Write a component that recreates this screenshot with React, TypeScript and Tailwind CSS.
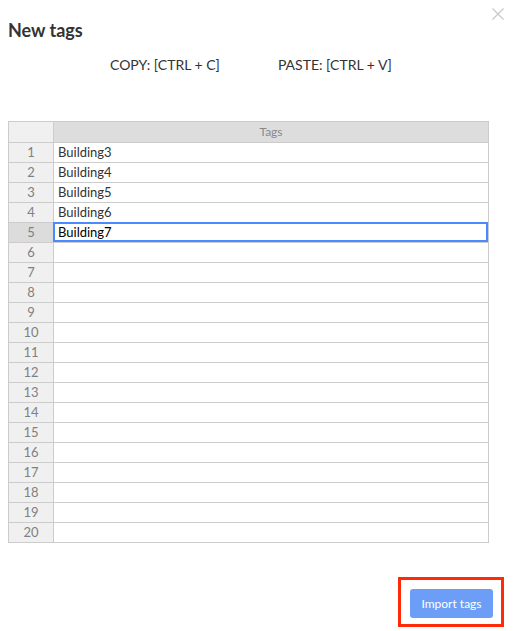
import React from 'react';

const tags = ['Building3', 'Building4', 'Building5', 'Building6', 'Building7'];
const rows = Array.from({ length: 20 }, (_, i) => tags[i] ?? '');
const selectedRow = 4;

const App: React.FC = () => {
  return (
    <div className="relative w-[513px] h-[631px] bg-white text-[#333] font-['Lato','Liberation_Sans',sans-serif]">
      {/* close button */}
      <button className="absolute top-[8px] right-[9px] w-[12px] h-[12px] text-[#c8c8c8]">
        <svg viewBox="0 0 12 12" width="12" height="12" fill="none" stroke="currentColor" strokeWidth="1.2">
          <path d="M0.5 0.5 L11.5 11.5 M11.5 0.5 L0.5 11.5" />
        </svg>
      </button>

      <h2 className="pt-[19px] pl-[8px] text-[18px] leading-[22px] font-bold text-[#333]">New tags</h2>

      <div className="mt-[14px] flex pl-[110px] gap-[58px] text-[14px] leading-[20px] text-[#333]">
        <span>COPY: [CTRL + C]</span>
        <span>PASTE: [CTRL + V]</span>
      </div>

      <div className="mt-[46px] mx-[8px] w-[481px] text-[13px]">
        <div className="flex h-[22px]">
          <div className="w-[46px] border border-[#ccc] bg-[#f0f0f0]" />
          <div className="flex-1 border-y border-r border-[#ccc] bg-[#dddddd] flex items-center justify-center text-[12px] text-[#888]">
            Tags
          </div>
        </div>
        {rows.map((value, i) => (
          <div key={i} className="flex h-[20px]">
            <div
              className={`w-[46px] border-x border-b border-[#ccc] flex items-center justify-center text-[#808080] ${
                i === selectedRow ? 'bg-[#dcdcdc]' : 'bg-[#f0f0f0]'
              }`}
            >
              {i + 1}
            </div>
            <div
              className={`relative flex-1 border-r border-b border-[#ccc] flex items-center pl-[4px] ${
                i === selectedRow ? 'text-black' : 'text-[#333]'
              }`}
            >
              {value}
              {i === selectedRow && (
                <div className="absolute -top-px -left-px right-0 bottom-0 border-2 border-[#4b89ff]" />
              )}
            </div>
          </div>
        ))}
      </div>

      <div className="mt-[34px] flex justify-end pr-[9px]">
        <div className="border-[3px] border-[#ff2a0a] pl-[9px] pr-[8px] pt-[9px] pb-[6px]">
          <button className="w-[83px] h-[29px] rounded-[3px] bg-[#6c9ef8] text-white text-[12px]">
            Import tags
          </button>
        </div>
      </div>
    </div>
  );
};

export default App;
